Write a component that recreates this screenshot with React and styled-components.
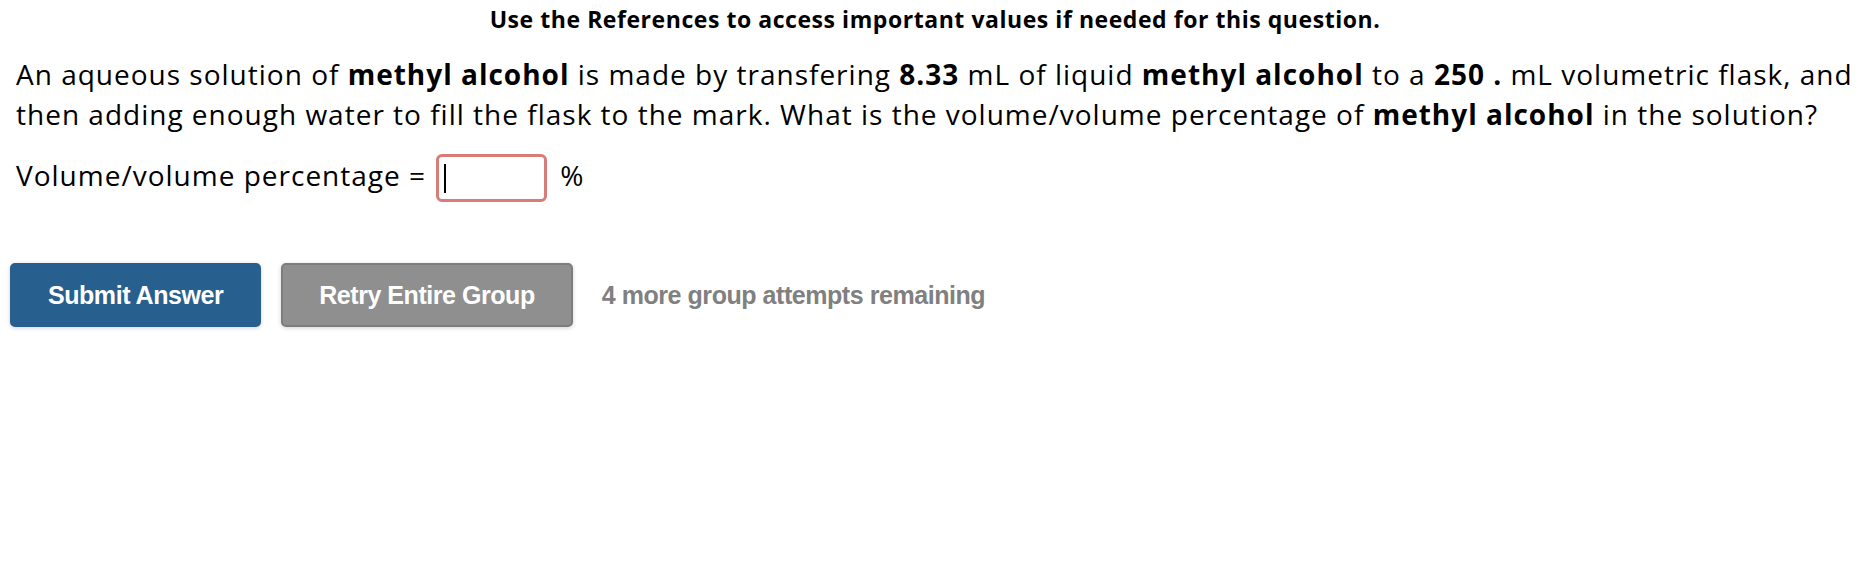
import React from "react";
import styled, { createGlobalStyle } from "styled-components";

const GlobalStyle = createGlobalStyle`
	body {
		margin: 0;
		background: #ffffff;
		color: #000000;
		font-family: "Open Sans", "Liberation Sans", sans-serif;
	}
`;

const Root = styled.div`
	width: 1868px;
	height: 586px;
	padding: 3px 14px 0 16px;
	box-sizing: border-box;
`;

const Notice = styled.div`
	font-size: 23px;
	line-height: 33px;
	font-weight: 700;
	letter-spacing: 0.55px;
	text-align: center;
`;

const Question = styled.p`
	margin: 18px 0 0;
	font-size: 28px;
	line-height: 40px;
	letter-spacing: 1px;
`;

const AnswerRow = styled.div`
	margin-top: 20px;
	font-size: 28px;
	line-height: 40px;
	letter-spacing: 1px;
`;

const AnswerBox = styled.div`
	display: inline-block;
	vertical-align: middle;
	box-sizing: border-box;
	width: 111px;
	height: 48px;
	margin-left: 2px;
	border: 3px solid #d87c7a;
	border-radius: 6px;
	padding: 7px 0 0 5px;
`;

const Caret = styled.div`
	width: 2px;
	height: 29px;
	background: #000000;
`;

const Unit = styled.span`
	margin-left: 13px;
`;

const Actions = styled.div`
	display: flex;
	align-items: center;
	margin: 61px 0 0 -6px;
	font-family: "Liberation Sans", Arial, sans-serif;
	font-size: 25px;
	letter-spacing: -0.45px;
	font-weight: 700;
`;

const Button = styled.button`
	height: 64px;
	padding: 0 36px;
	margin-right: ${props => props.gap}px;
	border: 2px solid ${props => (props.primary ? "#27608f" : "#7d7d7d")};
	border-radius: 5px;
	background: ${props => (props.primary ? "#27608f" : "#8f8f8f")};
	color: #ffffff;
	font: inherit;
	letter-spacing: inherit;
	box-shadow: 0 1px 4px rgba(0, 0, 0, 0.18);
`;

const Remaining = styled.span`
	color: #808080;
`;

const App = () => (
	<Root>
		<GlobalStyle />
		<Notice>Use the References to access important values if needed for this question.</Notice>
		<Question>
			An aqueous solution of <b>methyl alcohol</b> is made by transfering <b>8.33</b> mL of liquid{" "}
			<b>methyl alcohol</b> to a <b>250 .</b> mL volumetric flask, and then adding enough water to fill the
			flask to the mark. What is the volume/volume percentage of <b>methyl alcohol</b> in the solution?
		</Question>
		<AnswerRow>
			Volume/volume percentage ={" "}
			<AnswerBox>
				<Caret />
			</AnswerBox>
			<Unit>%</Unit>
		</AnswerRow>
		<Actions>
			<Button primary gap={20}>Submit Answer</Button>
			<Button gap={29}>Retry Entire Group</Button>
			<Remaining>4 more group attempts remaining</Remaining>
		</Actions>
	</Root>
);

export default App;
